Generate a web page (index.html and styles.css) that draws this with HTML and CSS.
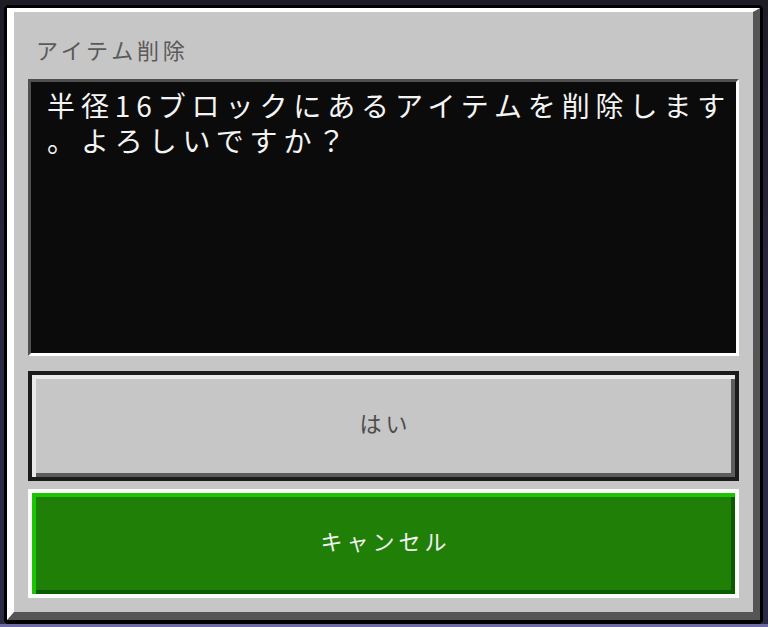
FILE: index.html
```html
<!DOCTYPE html>
<html lang="ja">
<head>
<meta charset="utf-8">
<title>アイテム削除</title>
<link rel="stylesheet" href="styles.css">
</head>
<body>
<div class="dialog">
  <div class="panel">
    <div class="title">アイテム削除</div>
    <div class="message">半径16ブロックにあるアイテムを削除します。よろしいですか？</div>
    <button class="btn btn-yes" type="button">はい</button>
    <button class="btn btn-cancel" type="button">キャンセル</button>
  </div>
</div>
</body>
</html>
```
FILE: styles.css
```css
* { box-sizing: border-box; }
html, body { margin: 0; padding: 0; }
body {
  width: 768px;
  height: 627px;
  overflow: hidden;
  background: linear-gradient(to bottom, #1d1c27 0, #2b2a44 60%, #2b2a44 624px, #6d6aa6 624px);
  font-family: "Noto Sans CJK JP", "Noto Sans", sans-serif;
}
.dialog {
  width: 759px;
  height: 619px;
  margin: 5px 0 0 4px;
  border: 3px solid #000;
  border-bottom-width: 4px;
  clip-path: polygon(3px 0, calc(100% - 3px) 0, 100% 3px, 100% calc(100% - 3px), calc(100% - 3px) 100%, 3px 100%, 0 calc(100% - 3px), 0 3px);
}
.panel {
  height: 100%;
  display: flex;
  flex-direction: column;
  border-style: solid;
  border-width: 4px 7px 8px 7px;
  border-color: #ffffff #555555 #555555 #ffffff;
  background: #c6c6c6;
  padding: 22px 14px 14px 14px;
}
.title {
  height: 30px;
  line-height: 30px;
  font-size: 22px;
  letter-spacing: 3.8px;
  color: #5a5a5a;
  padding-left: 8px;
  margin-bottom: 15px;
}
.message {
  height: 277px;
  border-style: solid;
  border-width: 3px;
  border-color: #4f4f4f #ffffff #ffffff #4f4f4f;
  background: #0b0b0b;
  padding: 6px 0 0 16px;
  color: #f4f4f4;
  font-size: 28px;
  line-height: 35px;
  letter-spacing: 5.9px;
  line-break: anywhere;
  word-break: break-all;
}
.btn {
  display: flex;
  align-items: center;
  justify-content: center;
  width: 100%;
  margin: 0;
  font-family: inherit;
  font-size: 22px;
  letter-spacing: 4px;
  padding: 0 0 8px 4px;
  cursor: default;
}
.btn-yes {
  margin-top: 15px;
  height: 110px;
  border: 4px solid #1b1b1b;
  background: #c6c6c6;
  box-shadow: inset 4px 4px 0 #e9e9e9, inset -4px -4px 0 #5c5c5c;
  color: #4c4c4c;
}
.btn-cancel {
  margin-top: 8px;
  height: 109px;
  border: 4px solid #fbfbfb;
  background: #207f07;
  box-shadow: inset 4px 4px 0 #1ac600, inset -4px -4px 0 #0c5a00;
  color: #f2f2f2;
}
```
